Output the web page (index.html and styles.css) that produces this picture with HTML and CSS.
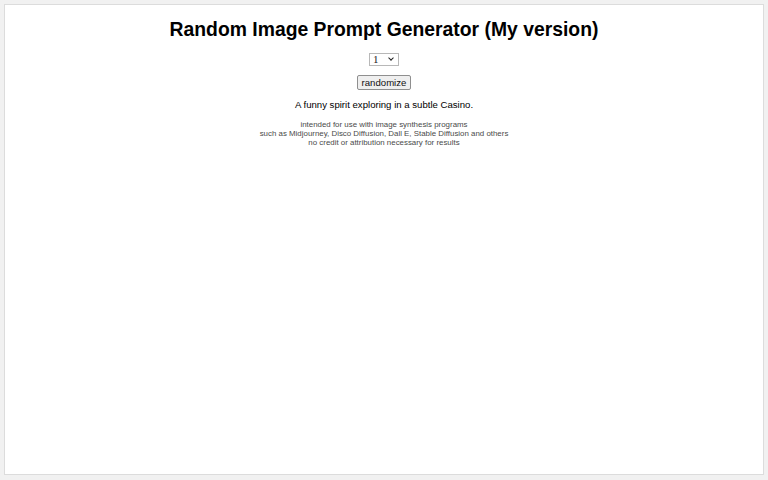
FILE: index.html
```html
<!DOCTYPE html>
<html>
<head>
<meta charset="utf-8">
<link rel="stylesheet" href="styles.css">
</head>
<body>
<div class="page">
  <h1 class="title">Random Image Prompt Generator (My version)</h1>
  <div class="controls">
    <span class="select-wrap">
      <select class="count">
        <option>1</option>
        <option>2</option>
        <option>3</option>
      </select>
    </span>
  </div>
  <div class="controls">
    <button class="btn">randomize</button>
  </div>
  <p class="prompt">A funny spirit exploring in a subtle Casino.</p>
  <p class="note">intended for use with image synthesis programs<br>such as Midjourney, Disco Diffusion, Dall E, Stable Diffusion and others<br>no credit or attribution necessary for results</p>
</div>
</body>
</html>
```
FILE: styles.css
```css
html, body { height: 100%; }
body {
  margin: 0;
  padding: 4px 4px 5px 4px;
  box-sizing: border-box;
  background: #f1f1f1;
  font-family: "Liberation Sans", Arial, sans-serif;
  color: #111;
}
.page {
  box-sizing: border-box;
  height: 100%;
  background: #fff;
  border: 1px solid #dcdcdc;
  text-align: center;
  padding-top: 14px;
}
.title {
  font-size: 19.35px;
  font-weight: bold;
  margin: 0 0 14px 0;
  line-height: 20px;
  color: #000;
}
.controls { margin: 0 0 8px 0; line-height: 0; }
.select-wrap {
  position: relative;
  display: inline-block;
}
.select-wrap::after {
  content: "";
  position: absolute;
  right: 6px;
  top: 3px;
  width: 3px;
  height: 3px;
  border-right: 1.5px solid #222;
  border-bottom: 1.5px solid #222;
  transform: rotate(45deg);
  pointer-events: none;
}
.count {
  -webkit-appearance: none;
  appearance: none;
  box-sizing: border-box;
  font-family: "Liberation Serif", serif;
  font-size: 11px;
  line-height: 11px;
  width: 30px;
  height: 13px;
  padding: 0 0 0 3px;
  border: 1px solid #b8b8b8;
  background: #fff;
  border-radius: 0;
  color: #222;
  display: block;
}
.btn {
  font-family: "Liberation Sans", Arial, sans-serif;
  font-size: 9.6px;
  height: 15px;
  padding: 0 4px;
  border: 1px solid #8f8f8f;
  background: #efefef;
  border-radius: 2px;
  color: #111;
  line-height: 13px;
  margin-top: 1px;
}
.prompt {
  font-size: 9.6px;
  margin: 9px 0 9px 0;
  line-height: 12px;
  color: #000;
}
.note {
  font-size: 7.9px;
  line-height: 9px;
  margin: 0;
  color: #4a4a4a;
}
```
